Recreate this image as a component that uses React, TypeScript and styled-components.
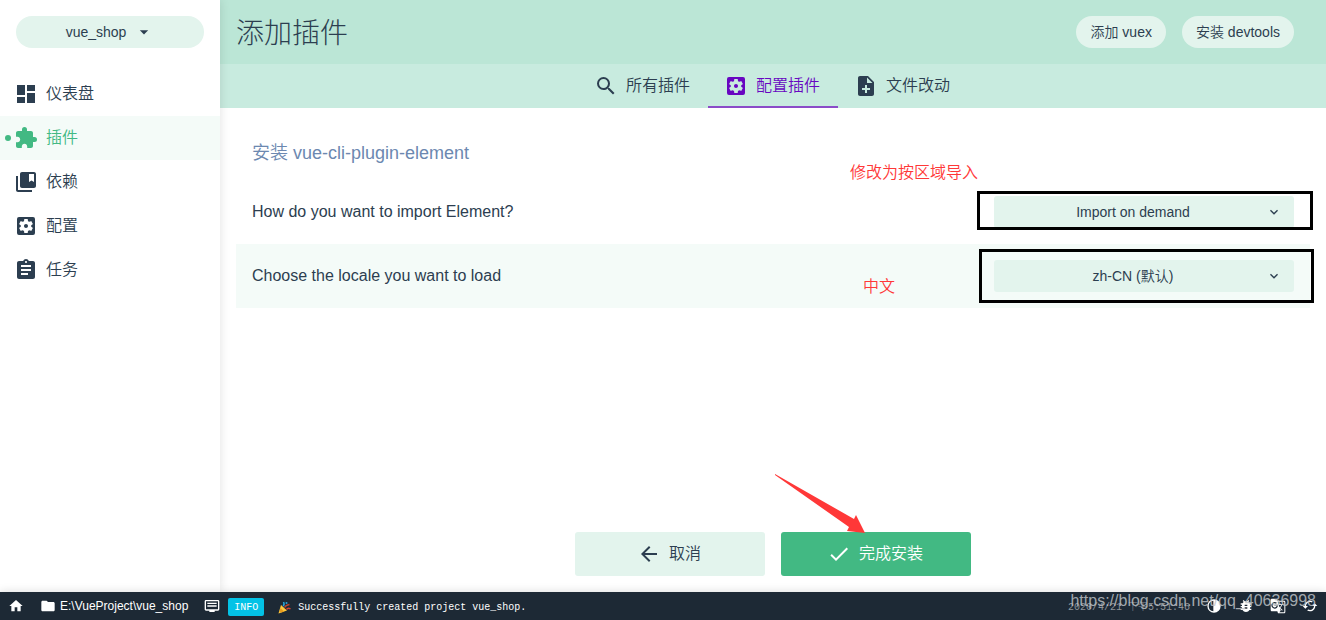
import React from "react";
import styled, { createGlobalStyle, css } from "styled-components";
import {
  MdArrowBack,
  MdArrowDropDown,
  MdAssignment,
  MdBugReport,
  MdCached,
  MdCheck,
  MdCollectionsBookmark,
  MdDashboard,
  MdExtension,
  MdFolder,
  MdGTranslate,
  MdHome,
  MdKeyboardArrowDown,
  MdNoteAdd,
  MdSearch,
  MdSettingsApplications,
} from "react-icons/md";

const color = {
  text: "#2c3e50",
  green: "#42b983",
  purple: "#6806c1",
  soft: "#e3f4ed",
  softer: "#f4fbf8",
  note: "#ff3838",
};

const GlobalStyle = createGlobalStyle`
  *, *::before, *::after { box-sizing: border-box; }
  body {
    margin: 0;
    background: #fff;
    color: ${color.text};
    font: 350 16px/20px "Liberation Sans", "Noto Sans CJK SC", sans-serif;
  }
  button, select { font: inherit; color: inherit; border: 0; cursor: pointer; }
  a { color: inherit; text-decoration: none; }
  svg { display: block; flex: none; }
`;

const Page = styled.div`
  display: flex;
  flex-direction: column;
  min-height: 100vh;
`;

const Body = styled.div`
  flex: 1;
  display: flex;
`;

const Sidebar = styled.aside`
  position: relative;
  z-index: 1;
  flex: 0 0 220px;
  background: #fff;
  box-shadow: 0 0 10px rgba(0, 0, 0, 0.12);
`;

const ProjectBar = styled.div`
  padding: 16px;
  margin-bottom: 8px;
`;

const Pill = styled.button<{ $wide?: boolean }>`
  display: flex;
  align-items: center;
  justify-content: center;
  gap: 8px;
  width: ${(p) => (p.$wide ? "100%" : "auto")};
  height: 32px;
  padding: 0 14px;
  border-radius: 16px;
  background: ${color.soft};
  font-size: 14px;
`;

const NavItem = styled.a<{ $active?: boolean }>`
  position: relative;
  display: flex;
  align-items: center;
  gap: 8px;
  height: 44px;
  padding: 0 14px;
  ${(p) =>
    p.$active &&
    css`
      color: ${color.green};
      background: ${color.softer};
      &::before {
        content: "";
        position: absolute;
        left: 5px;
        top: 19px;
        width: 6px;
        height: 6px;
        border-radius: 50%;
        background: ${color.green};
      }
    `}
`;

const Main = styled.main`
  flex: 1;
  min-width: 0;
  display: flex;
  flex-direction: column;
`;

const TopBar = styled.header`
  display: flex;
  align-items: center;
  gap: 16px;
  height: 64px;
  padding: 0 32px 0 16px;
  background: #bbe6d6;
`;

const Title = styled.h1`
  flex: 1;
  margin: 0;
  padding-top: 4px;
  font-size: 28px;
  line-height: 36px;
  font-weight: 300;
`;

const Tabs = styled.nav`
  display: flex;
  justify-content: center;
  height: 44px;
  background: #c8ebdf;
`;

const Tab = styled.button<{ $active?: boolean }>`
  display: flex;
  align-items: center;
  justify-content: center;
  gap: 8px;
  width: 130px;
  padding: 0 2px 0 0;
  background: none;
  color: ${(p) => (p.$active ? color.purple : color.text)};
  box-shadow: ${(p) => (p.$active ? "inset 0 -2px #8b4cc8" : "none")};
`;

const Content = styled.section`
  flex: 1;
  padding: 32px 16px 16px;
`;

const SectionTitle = styled.h2`
  margin: 0 0 14px;
  padding: 0 16px;
  font-size: 18px;
  line-height: 26px;
  font-weight: 350;
  color: #6c88b0;
`;

const Prompt = styled.div<{ $shaded?: boolean }>`
  position: relative;
  display: flex;
  align-items: center;
  justify-content: space-between;
  height: 64px;
  padding: 0 16px;
  background: ${(p) => (p.$shaded ? color.softer : "transparent")};
`;

const SelectBox = styled.div`
  position: relative;
  width: 300px;
  & > svg {
    position: absolute;
    right: 12px;
    top: 8px;
    pointer-events: none;
  }
`;

const Select = styled.select`
  appearance: none;
  display: block;
  width: 100%;
  height: 32px;
  padding: 0 30px 0 8px;
  border-radius: 3px;
  background: ${color.soft};
  font-size: 14px;
  text-align: center;
  text-align-last: center;
`;

const Frame = styled.span<{ $inset: string }>`
  position: absolute;
  inset: ${(p) => p.$inset};
  border: 3px solid #000;
  pointer-events: none;
`;

const Note = styled.span<{ $top: number; $right: number }>`
  position: absolute;
  top: ${(p) => p.$top}px;
  right: ${(p) => p.$right}px;
  color: ${color.note};
`;

const Actions = styled.footer`
  display: flex;
  justify-content: center;
  gap: 16px;
  padding: 16px;
`;

const ActionButton = styled.button<{ $primary?: boolean }>`
  position: relative;
  display: flex;
  align-items: center;
  justify-content: center;
  gap: 8px;
  width: 190px;
  height: 44px;
  padding: 0 2px 0 0;
  border-radius: 3px;
  background: ${(p) => (p.$primary ? color.green : color.soft)};
  color: ${(p) => (p.$primary ? "#fff" : color.text)};
`;

const Pointer = styled.svg`
  position: absolute;
  left: -6px;
  top: -58px;
`;

const StatusBar = styled.div`
  position: relative;
  z-index: 2;
  display: flex;
  align-items: center;
  height: 28px;
  background: #1d2935;
  color: #fff;
  box-shadow: 0 0 10px rgba(0, 0, 0, 0.15);
  font-size: 12px;
`;

const StatusItem = styled.a`
  display: flex;
  align-items: center;
  justify-content: center;
  gap: 4px;
  height: 28px;
  padding: 0 8px;
`;

const Badge = styled.span`
  height: 18px;
  margin-top: 2px;
  padding: 0 6px;
  border-radius: 2px;
  background: #03c2e6;
  font: 10px/20px "Liberation Mono", monospace;
`;

const LogText = styled.span`
  flex: 1;
  display: flex;
  align-items: center;
  gap: 7px;
  padding: 3px 0 0 14px;
  font: 10px/18px "Liberation Mono", monospace;
`;

const Clock = styled.time`
  padding: 3px 8px 0 0;
  color: #8e949a;
  font: 300 10px/18px "Liberation Mono", "Noto Sans CJK SC", monospace;
`;

const Watermark = styled.span`
  position: absolute;
  right: 10px;
  top: 0;
  font-size: 16px;
  line-height: 18px;
  color: rgba(190, 194, 198, 0.85);
  pointer-events: none;
`;

const PartyIcon = () => (
  <svg width="13" height="13" viewBox="0 0 26 26" aria-hidden="true">
    <path d="M1 25 6 8l12 11z" fill="#ffc83d" />
    <path d="M3 21 5 14l7 7-5 2z" fill="#e89b1c" />
    <path d="M10 10c3-2 3-4 1-8" stroke="#28a5d8" strokeWidth="3" fill="none" />
    <path d="M17 17c2-3 5-3 8-1" stroke="#d8432f" strokeWidth="3" fill="none" />
    <path d="M13 13c2-4 5-5 10-6" stroke="#b8432f" strokeWidth="3" fill="none" />
    <circle cx="17" cy="4" r="2" fill="#28a5d8" />
  </svg>
);

const LogIcon = () => (
  <svg width="16" height="16" viewBox="0 0 24 24" fill="currentColor" aria-hidden="true">
    <path
      fillRule="evenodd"
      d="M21 3H3a2 2 0 0 0-2 2v12c0 1.100.9 2 2 2h5v2h8v-2h5a2 2 0 0 0 2-2V5a2 2 0 0 0-2-2zm0 14H3V5h18z"
    />
    <path d="M5 7h14v2H5zM5 11h14v2H5z" />
  </svg>
);

const ContrastIcon = ({ size }: { size: number }) => (
  <svg width={size} height={size} viewBox="0 0 24 24" fill="currentColor" aria-hidden="true">
    <path
      fillRule="evenodd"
      d="M12 2a10 10 0 1 0 0 20 10 10 0 0 0 0-20zm-1 17.930A8 8 0 0 1 11 4.070z"
    />
  </svg>
);

const navItems = [
  { label: "仪表盘", Icon: MdDashboard },
  { label: "插件", Icon: MdExtension, active: true },
  { label: "依赖", Icon: MdCollectionsBookmark },
  { label: "配置", Icon: MdSettingsApplications },
  { label: "任务", Icon: MdAssignment },
];

const tabs = [
  { label: "所有插件", Icon: MdSearch },
  { label: "配置插件", Icon: MdSettingsApplications, active: true },
  { label: "文件改动", Icon: MdNoteAdd },
];

const tools = [
  { label: "切换主题", Icon: ContrastIcon },
  { label: "报告问题", Icon: MdBugReport },
  { label: "翻译", Icon: MdGTranslate },
  { label: "刷新", Icon: MdCached },
];

export default function App() {
  return (
    <Page>
      <GlobalStyle />
      <Body>
        <Sidebar>
          <ProjectBar>
            <Pill $wide>
              vue_shop
              <MdArrowDropDown size={20} />
            </Pill>
          </ProjectBar>
          <nav>
            {navItems.map(({ label, Icon, active }) => (
              <NavItem key={label} href="#" $active={active}>
                <Icon size={24} />
                {label}
              </NavItem>
            ))}
          </nav>
        </Sidebar>
        <Main>
          <TopBar>
            <Title>添加插件</Title>
            <Pill>添加 vuex</Pill>
            <Pill>安装 devtools</Pill>
          </TopBar>
          <Tabs>
            {tabs.map(({ label, Icon, active }) => (
              <Tab key={label} $active={active}>
                <Icon size={24} />
                {label}
              </Tab>
            ))}
          </Tabs>
          <Content>
            <SectionTitle>安装 vue-cli-plugin-element</SectionTitle>
            <Prompt>
              <label htmlFor="import-mode">How do you want to import Element?</label>
              <Note $top={-17} $right={332}>修改为按区域导入</Note>
              <SelectBox>
                <Select id="import-mode">
                  <option>Import on demand</option>
                </Select>
                <MdKeyboardArrowDown size={16} />
                <Frame $inset="-5px -19px -2px -17px" />
              </SelectBox>
            </Prompt>
            <Prompt $shaded>
              <label htmlFor="locale">Choose the locale you want to load</label>
              <Note $top={33} $right={415}>中文</Note>
              <SelectBox>
                <Select id="locale">
                  <option>zh-CN (默认)</option>
                </Select>
                <MdKeyboardArrowDown size={16} />
                <Frame $inset="-11px -20px -11px -15px" />
              </SelectBox>
            </Prompt>
          </Content>
          <Actions>
            <ActionButton>
              <MdArrowBack size={24} />
              取消
            </ActionButton>
            <ActionButton $primary>
              <MdCheck size={24} />
              完成安装
              <Pointer width="92" height="60" viewBox="0 0 92 60" aria-hidden="true">
                <path d="M0 0 79 45 81 41 90 59 72 57 74 53 0 1z" fill={color.note} />
              </Pointer>
            </ActionButton>
          </Actions>
        </Main>
      </Body>
      <StatusBar>
        <StatusItem href="#" aria-label="主页">
          <MdHome size={16} />
        </StatusItem>
        <StatusItem href="#">
          <MdFolder size={16} />
          E:\VueProject\vue_shop
        </StatusItem>
        <StatusItem href="#" aria-label="日志">
          <LogIcon />
        </StatusItem>
        <Badge>INFO</Badge>
        <LogText>
          <PartyIcon />
          Successfully created project vue_shop.
        </LogText>
        <Clock>2020/4/21 下午5:51:46</Clock>
        {tools.map(({ label, Icon }) => (
          <StatusItem key={label} href="#" aria-label={label}>
            <Icon size={16} />
          </StatusItem>
        ))}
        <Watermark>https://blog.csdn.net/qq_40636998</Watermark>
      </StatusBar>
    </Page>
  );
}
